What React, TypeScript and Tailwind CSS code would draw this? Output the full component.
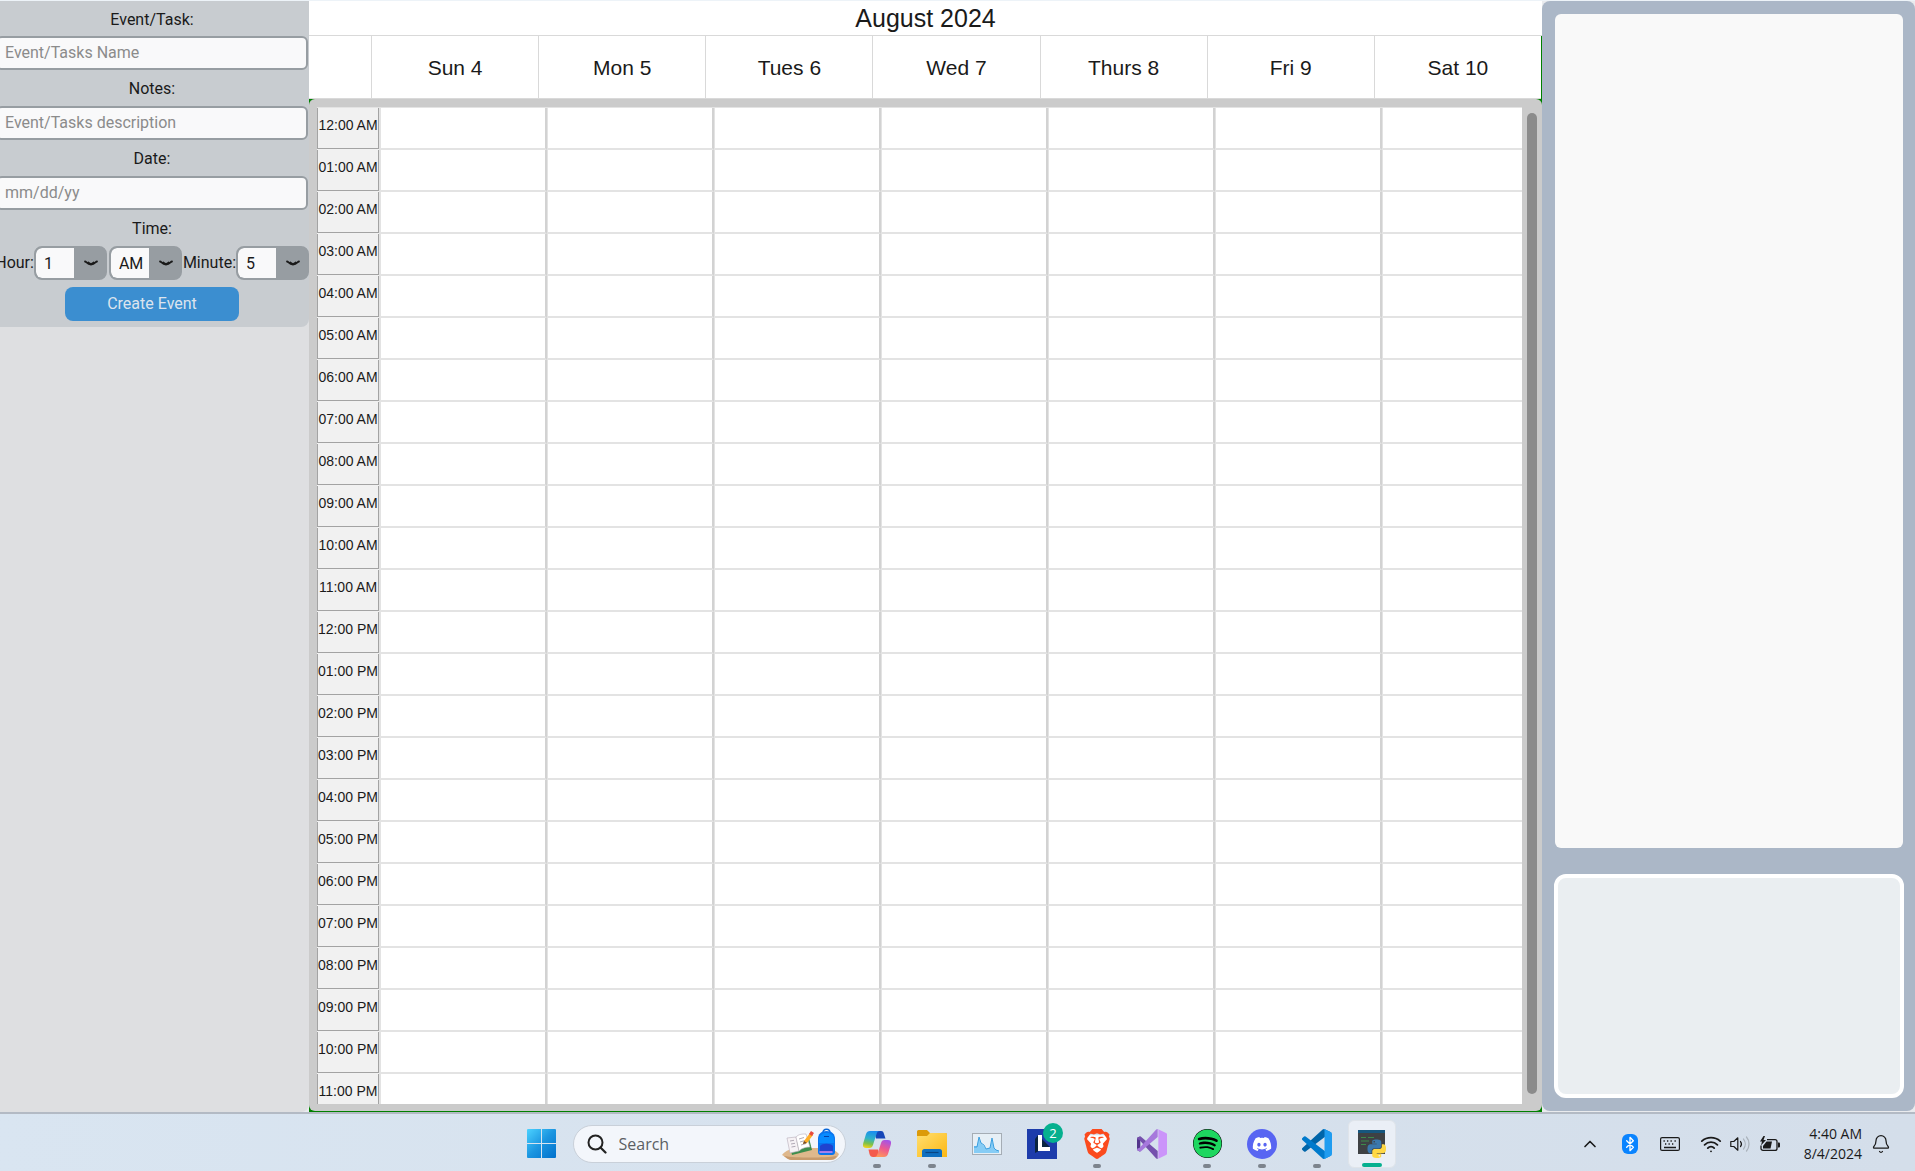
import React from "react";
import { FaDiscord, FaSpotify } from "react-icons/fa";
import { SiBrave } from "react-icons/si";
import { Bell, Bluetooth, ChevronUp, Wifi } from "lucide-react";

const DAYS = ["Sun 4", "Mon 5", "Tues 6", "Wed 7", "Thurs 8", "Fri 9", "Sat 10"];

// "12:00 AM" … "11:00 PM"
const HOURS = Array.from({ length: 24 }, (_, h) => {
  const hour = String(h % 12 || 12).padStart(2, "0");
  return `${hour}:00 ${h < 12 ? "AM" : "PM"}`;
});

const HOUR_OPTIONS = ["1", "2", "3", "4", "5", "6", "7", "8", "9", "10", "11", "12"];
const MINUTE_OPTIONS = ["0", "5", "10", "15", "20", "25", "30", "35", "40", "45", "50", "55"];

/* ---------- Event form ---------- */

interface TextFieldProps {
  id: string;
  label: string;
  placeholder: string;
}

function TextField({ id, label, placeholder }: TextFieldProps) {
  return (
    <>
      <label
        htmlFor={id}
        className="flex h-9 items-center justify-center pt-[2px] pr-[5px] first:h-[35px]"
      >
        {label}
      </label>
      <div className="-ml-1 pr-px">
        <input
          id={id}
          type="text"
          placeholder={placeholder}
          className="block h-[34px] w-full rounded-md border-2 border-[#979da2] bg-[#f9f9fa] px-[7px] pb-[2px] placeholder:text-[#8b8b8b] focus:outline-none"
        />
      </div>
    </>
  );
}

interface ComboProps {
  id: string;
  label: string;
  options: string[];
  value: string;
}

function Combo({ id, label, options, value }: ComboProps) {
  return (
    <div className="flex h-[34px] w-[73px] shrink-0 overflow-hidden rounded-lg border-2 border-[#979da2] bg-[#979da2]">
      <select
        id={id}
        aria-label={label}
        defaultValue={value}
        className="w-[38px] appearance-none rounded-l-md bg-[#f9f9fa] pt-px pl-2 focus:outline-none"
      >
        {options.map((o) => (
          <option key={o}>{o}</option>
        ))}
      </select>
      <svg viewBox="0 0 31 30" className="w-[31px] shrink-0" aria-hidden="true">
        <path
          d="M11 13.500c1.500 0 2 3 6 3s4.500-3 6-3M14.500 14.500c1.500 2 3.500 2 5 0"
          fill="none"
          stroke="#1a1a1a"
          strokeWidth="1.800"
          strokeLinecap="round"
        />
      </svg>
    </div>
  );
}

function EventForm() {
  return (
    <aside className="w-[309px] shrink-0 overflow-hidden rounded-br-lg bg-[#dedfe1] font-['Roboto',sans-serif] text-base text-[#1a1a1a]">
      <form className="rounded-br-lg bg-[#c8ccd0] pb-[6px]" onSubmit={(e) => e.preventDefault()}>
        <TextField id="name" label="Event/Task:" placeholder="Event/Tasks Name" />
        <TextField id="notes" label="Notes:" placeholder="Event/Tasks description" />
        <TextField id="date" label="Date:" placeholder="mm/dd/yy" />
        <div className="flex h-9 items-center justify-center pt-[2px] pr-[5px]">Time:</div>
        <div className="flex items-center justify-end">
          <label htmlFor="hour">Hour:</label>
          <Combo id="hour" label="Hour" options={HOUR_OPTIONS} value="1" />
          <div className="ml-[2px]">
            <Combo id="period" label="AM or PM" options={["AM", "PM"]} value="AM" />
          </div>
          <label htmlFor="minute" className="ml-px">
            Minute:
          </label>
          <Combo id="minute" label="Minute" options={MINUTE_OPTIONS} value="5" />
        </div>
        <div className="flex justify-center pt-[7px] pr-[5px]">
          <button type="submit" className="h-[34px] w-[174px] rounded-lg bg-[#3b8ed0] text-[#dce4ee]">
            Create Event
          </button>
        </div>
      </form>
    </aside>
  );
}

/* ---------- Week calendar ---------- */

function WeekCalendar() {
  return (
    <main className="flex min-w-0 flex-1 flex-col bg-[#008000] pb-px font-['Liberation_Sans',Arial,sans-serif] text-[#1a1a1a]">
      <h1 className="flex h-[35px] shrink-0 items-center justify-center border-b border-[#d9d9d9] bg-white pt-[2px] text-[25px]">
        August 2024
      </h1>
      <div className="mr-px flex h-[63px] shrink-0 border-b border-[#d9d9d9] bg-white text-[21px]">
        <div className="w-[62px] shrink-0" />
        {DAYS.map((day) => (
          <div
            key={day}
            className="flex flex-1 items-center justify-center border-l border-[#d9d9d9] pt-px"
          >
            {day}
          </div>
        ))}
      </div>

      <div className="flex min-h-0 flex-1 rounded-md bg-[#cbcbcb] pt-2 pr-[5px] pb-[7px] pl-2">
        <div className="min-w-0 flex-1 overflow-hidden border-t border-[#e3e3e3] bg-white">
          {/* wider than its frame, Saturday runs under the scrollbar */}
          <table className="w-[calc(100%+27px)] table-fixed border-separate border-spacing-0">
            <colgroup>
              <col className="w-[63px]" />
              {DAYS.map((day) => (
                <col key={day} />
              ))}
            </colgroup>
            <tbody>
              {HOURS.map((hour) => (
                <tr key={hour} className="h-[42px]">
                  <th
                    scope="row"
                    className="border-r border-[#e3e3e3] bg-[#f1f1f1] p-0 align-top text-[14px] font-normal whitespace-nowrap"
                  >
                    <div className="flex h-[41px] justify-center border-x border-b border-[#a3a3a3] pt-[7px] leading-5">
                      {hour}
                    </div>
                  </th>
                  {DAYS.map((day) => (
                    <td
                      key={day}
                      className="border-r-2 border-b-2 border-l border-r-[#d2d2d2] border-b-[#e3e3e3] border-l-[#e3e3e3] p-0"
                    />
                  ))}
                </tr>
              ))}
            </tbody>
          </table>
        </div>
        <div className="flex w-[15px] shrink-0 justify-end pt-[6px] pb-[10px]">
          <div className="w-[10px] rounded-full bg-[#8b8b8b]" />
        </div>
      </div>
    </main>
  );
}

/* ---------- Right panel ---------- */

function SidePanel() {
  return (
    <aside className="mb-px flex w-[373px] shrink-0 flex-col gap-[26px] rounded-lg bg-[#abb7c7] py-[13px] pr-[11px] pl-3">
      <div className="mx-px flex-1 rounded-md bg-[#f9f9f9]" />
      <div className="h-[224px] rounded-xl border-4 border-white bg-[#eaeef1]" />
    </aside>
  );
}

/* ---------- Taskbar icons ---------- */

function WindowsIcon() {
  return (
    <svg viewBox="0 0 29 29" className="size-[29px]">
      <defs>
        <linearGradient id="win" x1="0" y1="0" x2="1" y2="1">
          <stop offset="0" stopColor="#4cd2ff" />
          <stop offset=".5" stopColor="#1b95e0" />
          <stop offset="1" stopColor="#0070cc" />
        </linearGradient>
      </defs>
      <path
        fill="url(#win)"
        d="M1 0h13v14H0V1a1 1 0 0 1 1-1zM15 0h13a1 1 0 0 1 1 1v13H15zM0 15h14v14H1a1 1 0 0 1-1-1zM15 15h14v13a1 1 0 0 1-1 1H15z"
      />
    </svg>
  );
}

function SearchArt() {
  return (
    <svg viewBox="0 0 57 32" className="h-8 w-[57px]">
      <path d="M0 27c5-6 10-7 26-7 18 0 26 0 31 6-2 5-5 6-10 6H11c-6 0-7-3-11-5z" fill="#dfb88c" />
      <path d="M2 28c12 2 40 2 53 0-2 3-4 4-8 4H11c-5 0-6-2-9-4z" fill="#c79a6c" />
      <path d="M7 15l20-5 3 12-20 5z" fill="#3c8d4c" />
      <path d="M5 10l9-1 3 14-9 2z" fill="#f6f2f5" stroke="#b7adb8" strokeWidth=".6" />
      <path d="M14 9c3-3 6-3 10-3l4 13c-4 0-8 1-11 4z" fill="#fff" stroke="#b7adb8" strokeWidth=".6" />
      <path d="M8 13l4-.7M9 16l4-.7M9.500 19l4-.7M17 11l5-1.500M18 14l5-1.500M19 17l5-1.500" stroke="#9e97a5" strokeWidth=".8" />
      <path d="M22 13l6-8 3 2-6 8-4 1z" fill="#ffad25" />
      <path d="M27 6l2-3 3 2-2 3z" fill="#e74b3f" />
      <path d="M21 16l1-3 3 2z" fill="#6b4a35" />
      <path d="M41 5c0-5 7-5 7 0" fill="none" stroke="#0866d8" strokeWidth="1.500" />
      <path d="M36 11c0-5 3-8 8.500-8s8.500 3 8.500 8v13c0 2-1 3-3 3H39c-2 0-3-1-3-3z" fill="#0a74ee" />
      <path d="M37 12c0-5 3-7 7.500-7s7.500 2 7.500 7v3H37z" fill="#078bff" />
      <path d="M38 18c2-3 11-3 13 0v6H38z" fill="#1f43cf" />
      <path d="M38 24h12" stroke="#d68af0" strokeWidth="1.500" strokeLinecap="round" />
      <path d="M42 8.500h5" stroke="#063fa8" strokeWidth="1" />
    </svg>
  );
}

function CopilotIcon() {
  return (
    <svg viewBox="0 0 28 26" className="h-[26px] w-7">
      <defs>
        <linearGradient id="cpA" x1=".5" y1="0" x2=".3" y2="1">
          <stop offset="0" stopColor="#1a8df0" />
          <stop offset=".45" stopColor="#2fb3c8" />
          <stop offset=".75" stopColor="#7cc04a" />
          <stop offset="1" stopColor="#f1d21c" />
        </linearGradient>
        <linearGradient id="cpB" x1=".7" y1="0" x2=".3" y2="1">
          <stop offset="0" stopColor="#a553e8" />
          <stop offset=".5" stopColor="#ee5a8e" />
          <stop offset="1" stopColor="#ff9a57" />
        </linearGradient>
      </defs>
      <path d="M11 0h7c2 0 2.500 1 3 3l1.500 4.500H13z" fill="#1647b8" />
      <path d="M17 26h-7c-2 0-3-1-3.500-3L5.500 18.500H15z" fill="#f45a4c" />
      <path d="M7 0h10c-2 0-3 1-3.500 3L10 14c-.7 2-1.500 3-3.500 3H3c-3 0-3.500-2-2.700-5L3 3c.7-2 2-3 4-3z" fill="url(#cpA)" />
      <path d="M21 26H11c2 0 3-1 3.500-3L18 12c.7-2 1.500-3 3.500-3H25c3 0 3.500 2 2.700 5L25 23c-.7 2-2 3-4 3z" fill="url(#cpB)" />
    </svg>
  );
}

function FolderIcon() {
  return (
    <svg viewBox="0 0 30 27" className="h-[27px] w-[30px]">
      <defs>
        <linearGradient id="fold" x1="0" y1="0" x2="1" y2="1">
          <stop offset="0" stopColor="#ffdf70" />
          <stop offset="1" stopColor="#fcb713" />
        </linearGradient>
      </defs>
      <path d="M0 1.500A1.500 1.500 0 0 1 1.500 0H10l3 3h15.500A1.500 1.500 0 0 1 30 4.500V8H0z" fill="#dc9a09" />
      <path d="M0 6h10l3-3h15.500A1.500 1.500 0 0 1 30 4.500V27H0z" fill="url(#fold)" />
      <path d="M5 27v-5.500A2.500 2.500 0 0 1 7.500 19h15a2.500 2.500 0 0 1 2.500 2.500V27z" fill="#0f6fc0" />
      <path d="M8.500 22.500h13" stroke="#0a4582" strokeWidth="1.200" />
    </svg>
  );
}

function MonitorIcon() {
  return (
    <svg viewBox="0 0 30 22" className="h-[22px] w-[30px]">
      <rect x=".5" y=".5" width="29" height="21" fill="#e6eff6" stroke="#a5adb5" />
      <path d="M2 20v-7l3 0 2-8 2 5 2 2 3 4 4-1 2-9 2 9 2 2 3 1v2z" fill="#86ccf5" />
      <path d="M2 14h3l2-10 2 6 3 2 2 4 4-1 2-10 2 10 2 2 3 1" fill="none" stroke="#3a9fe0" strokeWidth="1" />
    </svg>
  );
}

function LIcon() {
  return (
    <div className="relative flex size-[30px] items-center justify-center bg-[#1d3cab]">
      <svg viewBox="0 0 30 30" className="size-[30px]">
        <path d="M11 6L8 10v14l4-2h10l1-4z" fill="#0b2440" />
        <path d="M11 6h4v12h8v4H11z" fill="#fff" />
      </svg>
      <span className="absolute -top-[6px] left-4 flex size-5 items-center justify-center rounded-full bg-[#05b08f] text-[13px] leading-5 text-white">
        2
      </span>
    </div>
  );
}

function BraveIcon() {
  return (
    <span className="relative flex size-[30px] items-center justify-center">
      <svg viewBox="0 0 24 24" className="absolute size-[30px]">
        <path d="M5 5h14l1.500 3L18 17l-6 5-6-5L3.500 8z" fill="#fff" />
      </svg>
      <SiBrave className="relative size-[30px] text-[#fb4a1d]" />
    </span>
  );
}

function VisualStudioIcon() {
  return (
    <svg viewBox="0 0 90 90" className="size-[30px]">
      <path d="M0 29c0-2 1-3 3-4l7-3v46l-7-3c-2-1-3-2-3-4z" fill="#52348c" />
      <path d="M3 25l6-2c2-1 3 0 4 1l49 42v24c-2 0-4-1-5-2L10 36c-3-3-6-4-10-5 0-3 1-5 3-6z" fill="#7550ad" />
      <path d="M3 65l6 2c2 1 3 0 4-1l49-42V0c-2 0-4 1-5 2L10 54c-3 3-6 4-10 5 0 3 1 5 3 6z" fill="#a678dc" />
      <path d="M62 0l25 12c2 1 3 2 3 4v58c0 2-1 3-3 4L62 90c2-1 2-2 2-4V4c0-2 0-3-2-4z" fill="#cb94fa" />
    </svg>
  );
}

function VSCodeIcon() {
  return (
    <svg viewBox="0 0 100 100" className="size-[30px]">
      <path
        fill="#0065a9"
        d="M96.461 10.796L75.857.876a6.230 6.230 0 0 0-7.107 1.207L1.299 63.583a4.167 4.167 0 0 0 .004 6.162l5.510 5.009a4.167 4.167 0 0 0 5.321.236l81.227-61.620c2.725-2.067 6.639-.124 6.639 3.297v-.240a6.250 6.250 0 0 0-3.539-5.631z"
      />
      <path
        fill="#007acc"
        d="M96.461 89.204l-20.604 9.920a6.230 6.230 0 0 1-7.107-1.207l-67.451-61.500a4.167 4.167 0 0 1 .004-6.162l5.510-5.009a4.167 4.167 0 0 1 5.321-.236l81.227 61.620c2.725 2.067 6.639.124 6.639-3.297v.240a6.250 6.250 0 0 1-3.539 5.631z"
      />
      <path
        fill="#1f9cf0"
        d="M75.858 99.126a6.230 6.230 0 0 1-7.108-1.210c2.306 2.307 6.250.673 6.250-2.588V4.672c0-3.262-3.944-4.895-6.250-2.589a6.230 6.230 0 0 1 7.108-1.210l20.600 9.908A6.250 6.250 0 0 1 100 16.413v67.174a6.250 6.250 0 0 1-3.541 5.633z"
      />
    </svg>
  );
}

const PYTHON_HALF =
  "M14.25.18l.9.2.73.26.59.3.45.32.34.34.25.34.16.33.1.3.04.26.02.2-.01.13V8.5l-.05.63-.13.55-.21.46-.26.38-.3.31-.33.25-.35.19-.35.14-.33.1-.3.07-.26.04-.21.02H8.77l-.69.05-.59.14-.5.22-.41.27-.33.32-.27.35-.2.36-.15.37-.1.35-.07.32-.04.27-.02.21v3.06H3.17l-.21-.03-.28-.07-.32-.12-.35-.18-.36-.26-.36-.36-.35-.46-.32-.59-.28-.73-.21-.88-.14-1.05-.05-1.23.06-1.22.16-1.04.24-.87.32-.71.36-.57.4-.44.42-.33.42-.24.4-.16.36-.1.32-.05.24-.01h.16l.06.01h8.16v-.83H6.18l-.01-2.75-.02-.37.05-.34.11-.31.17-.28.25-.26.31-.23.38-.2.44-.18.51-.15.58-.12.64-.1.71-.06.77-.04.84-.02 1.27.05zm-6.3 1.98l-.23.33-.08.41.08.41.23.34.33.22.41.09.41-.09.33-.22.23-.34.08-.41-.08-.41-.23-.33-.33-.22-.41-.09-.41.09z";

function PythonConsoleIcon() {
  return (
    <svg viewBox="0 0 28 28" className="size-7">
      <rect x="0" y="0" width="27" height="24" fill="#3e4144" />
      <rect x="0" y="0" width="27" height="3" fill="#16567e" />
      <path d="M3 7.500h5M10 7.500h6M3 11h8M3 14.500h5" stroke="#3c8a4b" strokeWidth="1" />
      <g transform="translate(9.500 9.500) scale(.77)">
        <path d={PYTHON_HALF} fill="#3a78ae" />
        <path d={PYTHON_HALF} fill="#ffd845" transform="rotate(180 12 12)" />
      </g>
    </svg>
  );
}

function KeyboardIcon() {
  return (
    <svg viewBox="0 0 20 14" className="h-[14px] w-5">
      <rect x=".6" y=".6" width="18.800" height="12.800" rx="1.500" fill="none" stroke="#1a1a1a" strokeWidth="1.200" />
      <path d="M3.500 4h1.300M7 4h1.300M10.500 4h1.300M14.500 4h1.300M5 7h1.300M8.500 7h1.300M12 7h1.300M4 10.500h12" stroke="#1a1a1a" strokeWidth="1.300" />
    </svg>
  );
}

function VolumeIcon() {
  return (
    <svg viewBox="0 0 20 16" className="h-4 w-5" fill="none" strokeWidth="1.200" strokeLinecap="round">
      <path d="M.8 5.500h3l4-3.700v12.400l-4-3.700h-3z" stroke="#1a1a1a" strokeLinejoin="round" />
      <path d="M10.500 5.500a4 4 0 0 1 0 5" stroke="#1a1a1a" />
      <path d="M13.500 3a8 8 0 0 1 0 10M16.500 1a11 11 0 0 1 0 14" stroke="#a9b1ba" />
    </svg>
  );
}

function BatteryIcon() {
  return (
    <svg viewBox="0 0 20 16" className="h-4 w-5">
      <path d="M7 3.600h8a2 2 0 0 1 2 2v6.800a2 2 0 0 1-2 2H3a2 2 0 0 1-2-2V9.500" fill="none" stroke="#1a1a1a" strokeWidth="1.300" />
      <path d="M18 6.500h1a1 1 0 0 1 1 1v3a1 1 0 0 1-1 1h-1z" fill="#1a1a1a" />
      <path d="M3 12.500V10l3.500-4.500H12L10.500 12.500z" fill="#1a1a1a" />
      <path d="M3.500 0L0 5.500h2L1 9.500l5-5.500H3.500L5 0z" fill="#1a1a1a" />
    </svg>
  );
}

/* ---------- Taskbar ---------- */

type AppState = "closed" | "running" | "active";

const APPS: { name: string; icon: React.ReactNode; state: AppState }[] = [
  { name: "Copilot", icon: <CopilotIcon />, state: "running" },
  { name: "File Explorer", icon: <FolderIcon />, state: "running" },
  { name: "Resource Monitor", icon: <MonitorIcon />, state: "closed" },
  { name: "Lockdown", icon: <LIcon />, state: "closed" },
  { name: "Brave", icon: <BraveIcon />, state: "running" },
  { name: "Visual Studio", icon: <VisualStudioIcon />, state: "closed" },
  {
    name: "Spotify",
    icon: <FaSpotify className="size-[29px] rounded-full bg-black text-[#1ed760]" />,
    state: "running",
  },
  {
    name: "Discord",
    icon: (
      <span className="flex size-[30px] items-center justify-center rounded-full bg-[#5865f2]">
        <FaDiscord className="size-5 text-white" />
      </span>
    ),
    state: "running",
  },
  { name: "Visual Studio Code", icon: <VSCodeIcon />, state: "running" },
  { name: "Python", icon: <PythonConsoleIcon />, state: "active" },
];

function AppButton({ name, icon, state }: (typeof APPS)[number]) {
  return (
    <button type="button" aria-label={name} className="flex w-[55px] items-center justify-center">
      <span
        className={
          state === "active"
            ? "relative flex size-12 items-center justify-center rounded-md border border-[#dfe4ea] bg-[#eaeff6]"
            : "relative flex size-12 items-center justify-center"
        }
      >
        {icon}
        {state === "running" && (
          <span className="absolute bottom-0 h-1 w-2 rounded-full bg-[#7d848d]" />
        )}
        {state === "active" && (
          <span className="absolute bottom-0 h-1 w-5 rounded-full bg-[#05b08f]" />
        )}
      </span>
    </button>
  );
}

function Taskbar() {
  return (
    <footer className="grid h-[59px] shrink-0 grid-cols-[1fr_auto_1fr] items-center border-t-2 border-[#b3bac4] bg-linear-to-r from-[#d9e5f1] to-[#d4deea] pt-[2px] pr-[2px] font-['Open_Sans','Segoe_UI',sans-serif] text-[#1a1a1a]">
      <div />
      <div className="flex items-center">
        <button type="button" aria-label="Start" className="flex w-[55px] justify-center">
          <WindowsIcon />
        </button>
        <div className="mx-1 flex h-[38px] w-[273px] items-center rounded-full border border-[#c9d0d9] bg-[#f3f6fb] pr-[6px] pl-[13px]">
          <svg viewBox="0 0 20 20" className="size-5 shrink-0" aria-hidden="true">
            <circle cx="8.500" cy="8.500" r="7" fill="none" stroke="#222" strokeWidth="2" />
            <path d="M13.500 13.500l5 5" stroke="#222" strokeWidth="2.200" strokeLinecap="round" />
          </svg>
          <input
            type="text"
            aria-label="Search"
            placeholder="Search"
            className="ml-3 min-w-0 flex-1 text-base placeholder:text-[#5b5f64] focus:outline-none"
          />
          <SearchArt />
        </div>
        {APPS.map((app) => (
          <AppButton key={app.name} {...app} />
        ))}
      </div>

      <div className="flex items-center justify-end pr-[22px]">
        <ChevronUp className="mr-[22px] size-5" strokeWidth={2} />
        <span className="mr-[22px] flex h-5 w-4 items-center justify-center rounded-md bg-[#0a84ff]">
          <Bluetooth className="size-4 text-white" strokeWidth={2} />
        </span>
        <span className="mr-5">
          <KeyboardIcon />
        </span>
        <Wifi className="mr-2 size-[22px]" strokeWidth={2} />
        <span className="mr-[10px]">
          <VolumeIcon />
        </span>
        <BatteryIcon />
        <div className="ml-6 text-right text-[14px] leading-5">
          <div>4:40 AM</div>
          <div>8/4/2024</div>
        </div>
        <Bell className="ml-[9px] size-5" strokeWidth={1.500} />
      </div>
    </footer>
  );
}

export default function App() {
  return (
    <div className="flex h-screen flex-col overflow-hidden border-t border-[#edf3f8] bg-[#e9ebee]">
      <div className="flex min-h-0 flex-1">
        <EventForm />
        <WeekCalendar />
        <SidePanel />
      </div>
      <Taskbar />
    </div>
  );
}
